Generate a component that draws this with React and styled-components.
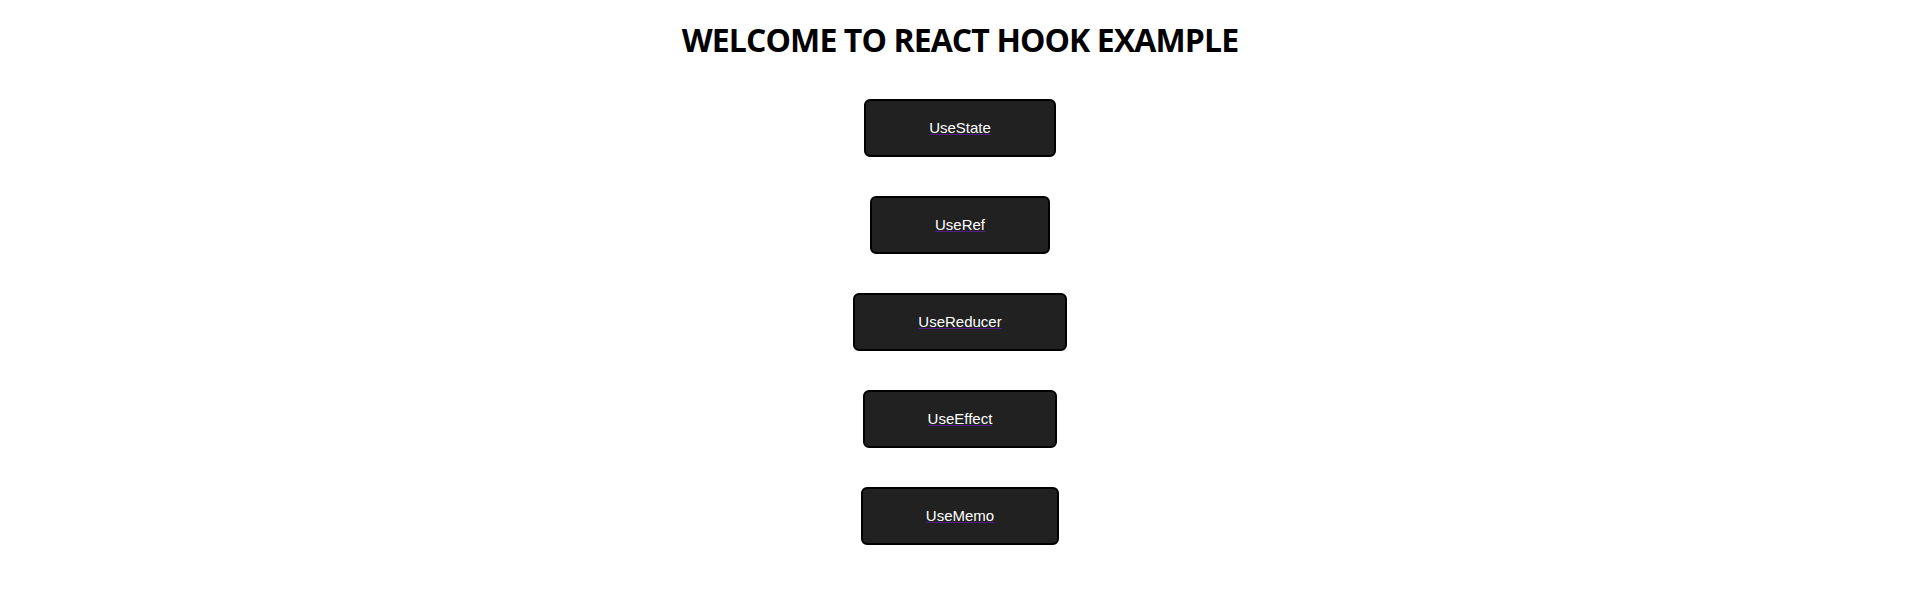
import React from "react";
import styled, { createGlobalStyle } from "styled-components";

const GlobalStyle = createGlobalStyle`
  html, body {
    margin: 0;
    padding: 0;
    background: #ffffff;
  }
`;

const hooks = ["UseState", "UseRef", "UseReducer", "UseEffect", "UseMemo"];

export default function App() {
  return (
    <>
      <GlobalStyle />
      <Page>
        <Title>WELCOME TO REACT HOOK EXAMPLE</Title>
        <Menu>
          {hooks.map((name) => (
            <HookButton key={name}>
              <HookLink href="#">{name}</HookLink>
            </HookButton>
          ))}
        </Menu>
      </Page>
    </>
  );
}

const Page = styled.div`
  display: flex;
  flex-direction: column;
  align-items: center;
  padding-top: 18px;
`;

const Title = styled.h1`
  margin: 0;
  font-family: "Open Sans", "Noto Sans", sans-serif;
  font-weight: 700;
  font-size: 32px;
  letter-spacing: -0.9px;
  line-height: 44px;
  color: #000;
`;

const Menu = styled.div`
  display: flex;
  flex-direction: column;
  align-items: center;
  gap: 39px;
  margin-top: 37px;
`;

const HookButton = styled.button`
  box-sizing: border-box;
  height: 58px;
  padding: 0 63px;
  display: flex;
  align-items: center;
  justify-content: center;
  background-color: #212121;
  border: 2px solid #000;
  border-radius: 6px;
  cursor: pointer;
`;

const HookLink = styled.a`
  font-family: "Liberation Sans", Arial, sans-serif;
  font-size: 15px;
  line-height: 18px;
  color: #ffffff;
  text-decoration: underline;
  text-decoration-color: #551a8b;
`;
